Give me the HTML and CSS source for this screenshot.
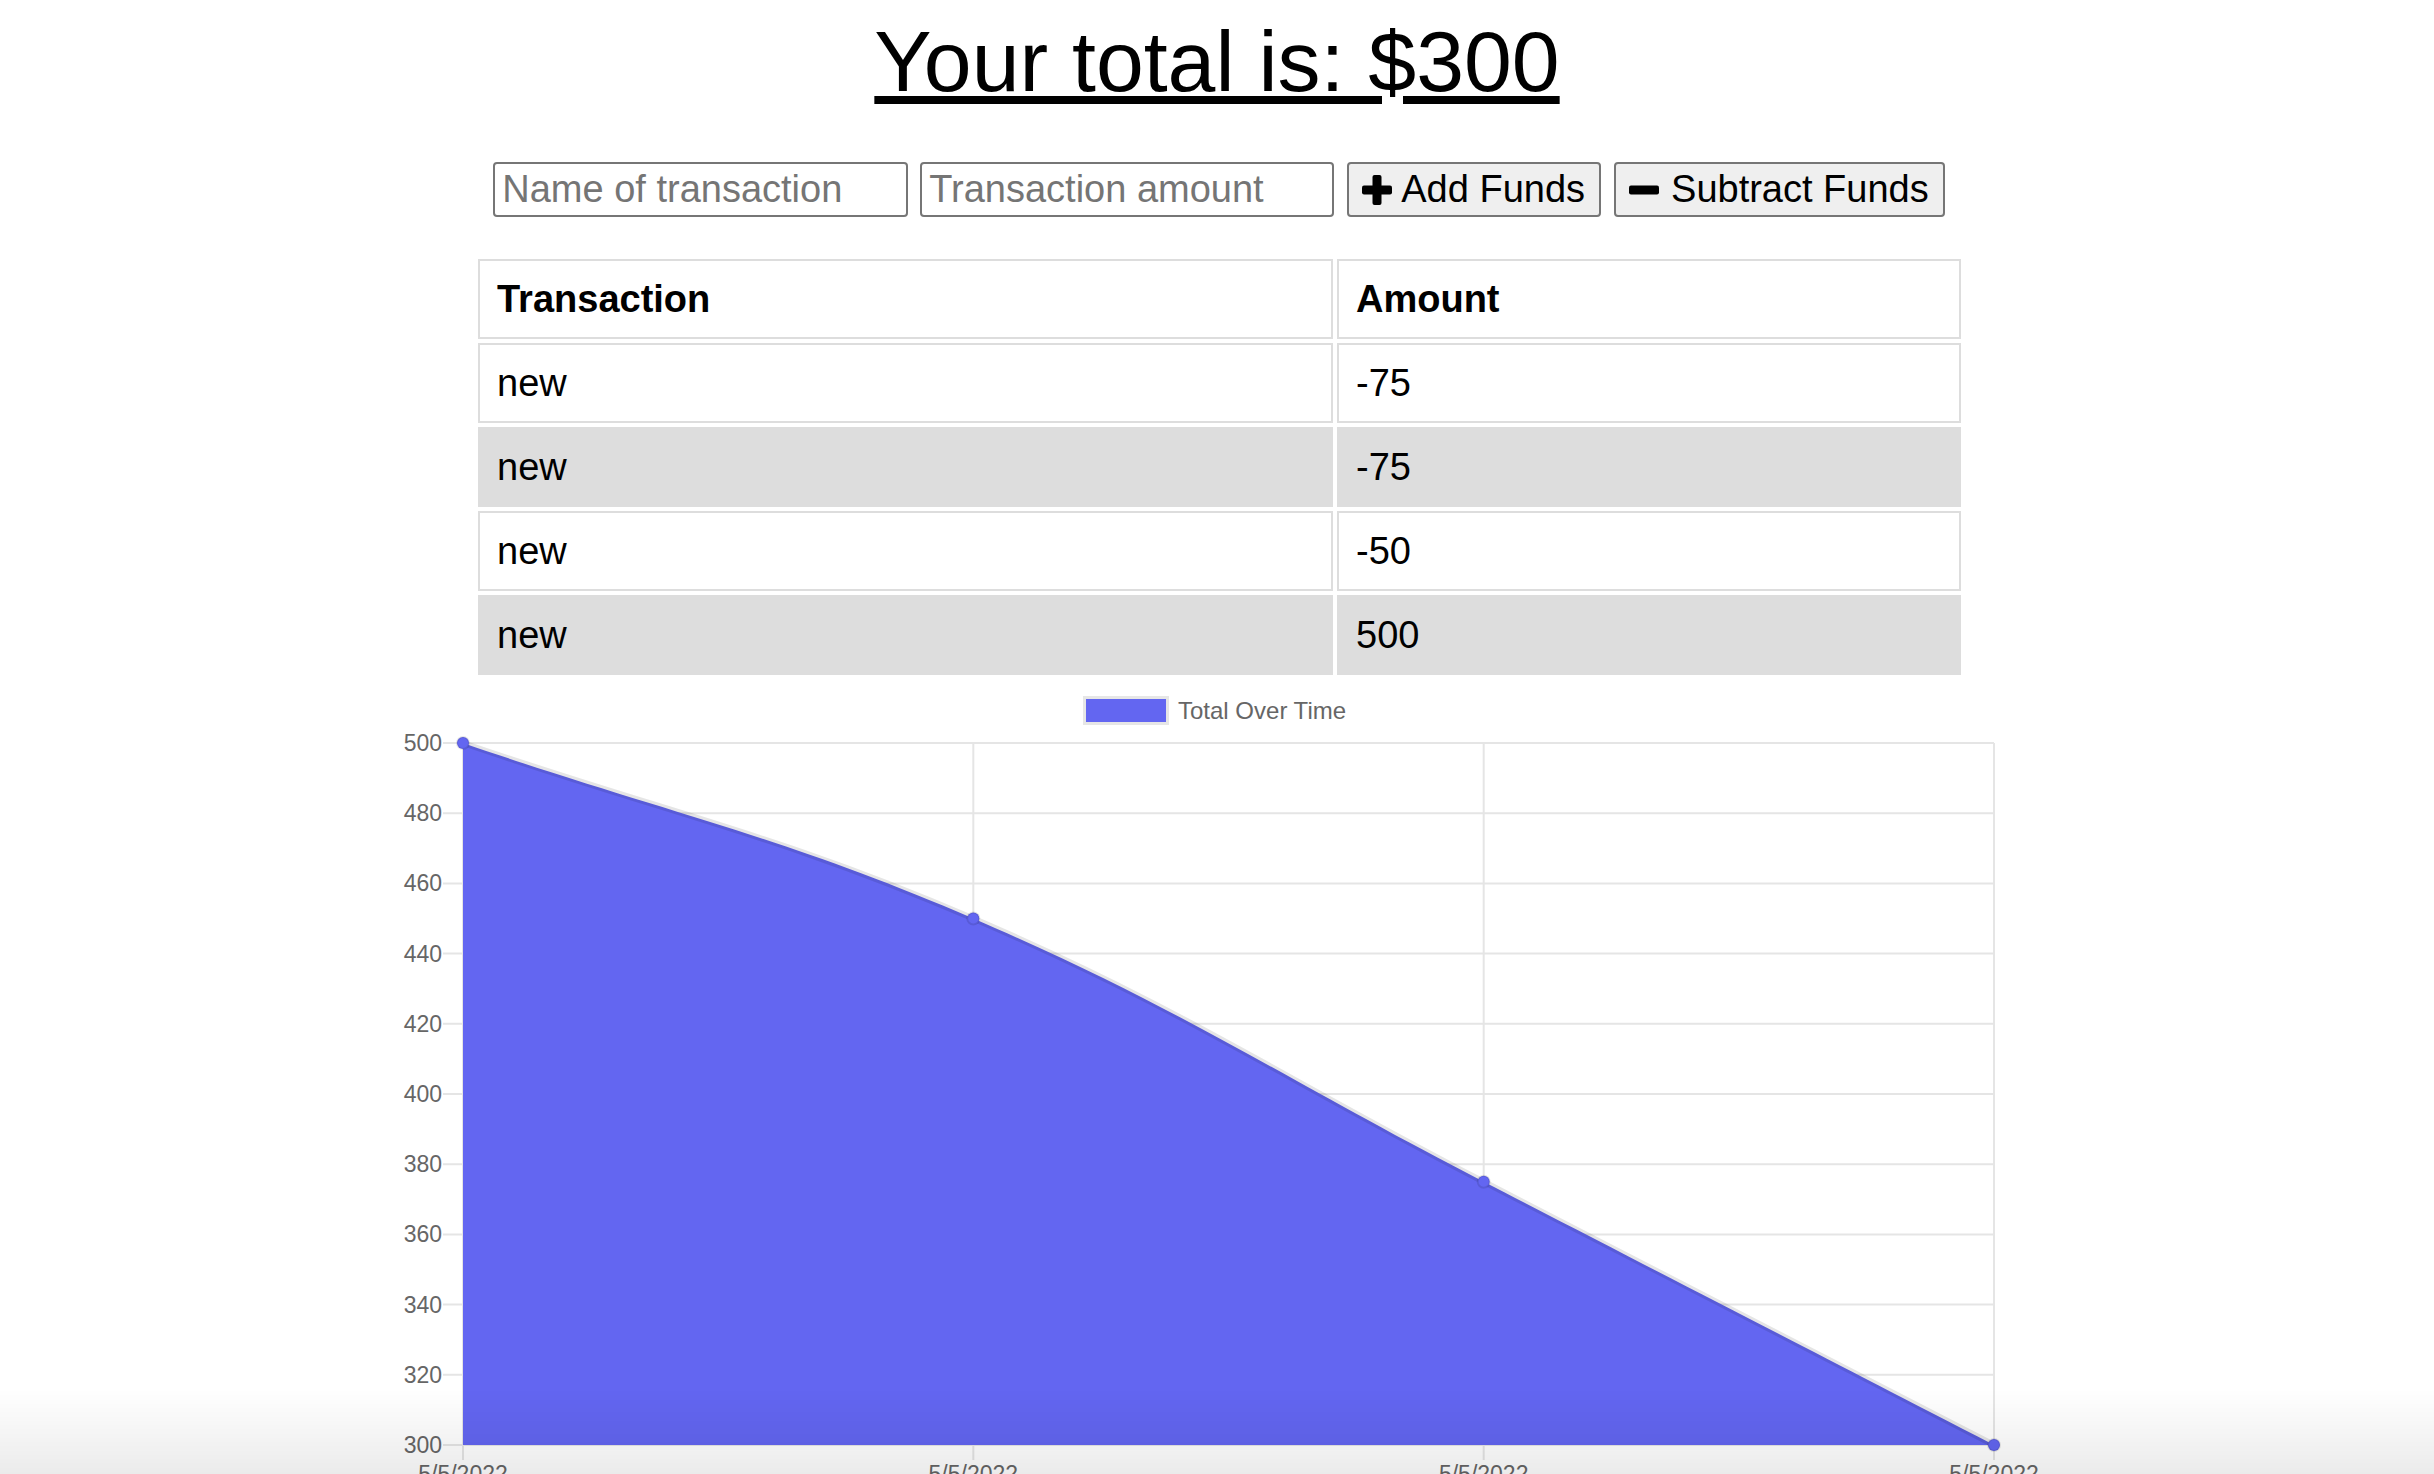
FILE: index.html
```html
<!DOCTYPE html>
<html lang="en">
<head>
<meta charset="utf-8">
<title>Budget Tracker</title>
<link rel="stylesheet" href="styles.css">
</head>
<body>
<main class="page">
  <h1 class="total">Your total is: $300</h1>

  <form class="entry">
    <input type="text" class="field field-name" placeholder="Name of transaction">
    <input type="text" class="field field-amount" placeholder="Transaction amount">
    <button type="button" class="btn btn-add">
      <svg class="btn-icon" viewBox="0 0 30 30" aria-hidden="true"><rect x="10.5" y="0" width="9" height="30" rx="2"/><rect x="0" y="10.5" width="30" height="9" rx="2"/></svg>
      <span class="btn-label btn-label-add">Add Funds</span>
    </button>
    <button type="button" class="btn btn-sub">
      <svg class="btn-icon" viewBox="0 0 30 30" aria-hidden="true"><rect x="0" y="10.5" width="30" height="9" rx="2"/></svg>
      <span class="btn-label btn-label-sub">Subtract Funds</span>
    </button>
  </form>

  <table class="ledger">
    <thead>
      <tr><th class="col-name">Transaction</th><th class="col-amount">Amount</th></tr>
    </thead>
    <tbody>
      <tr><td>new</td><td>-75</td></tr>
      <tr class="alt"><td>new</td><td>-75</td></tr>
      <tr><td>new</td><td>-50</td></tr>
      <tr class="alt"><td>new</td><td>500</td></tr>
    </tbody>
  </table>

  <div class="chart">
    <svg class="chart-svg" viewBox="0 0 2434 794" width="2434" height="794">
      <g class="legend">
        <rect class="legend-box" x="1084.5" y="17.5" width="83" height="26"/>
        <text class="legend-text" x="1178" y="38.5">Total Over Time</text>
      </g>
      <g class="grid">
        <line x1="443" y1="63" x2="1994" y2="63"/>
        <line x1="443" y1="133.2" x2="1994" y2="133.2"/>
        <line x1="443" y1="203.4" x2="1994" y2="203.4"/>
        <line x1="443" y1="273.6" x2="1994" y2="273.6"/>
        <line x1="443" y1="343.8" x2="1994" y2="343.8"/>
        <line x1="443" y1="414" x2="1994" y2="414"/>
        <line x1="443" y1="484.2" x2="1994" y2="484.2"/>
        <line x1="443" y1="554.4" x2="1994" y2="554.4"/>
        <line x1="443" y1="624.6" x2="1994" y2="624.6"/>
        <line x1="443" y1="694.8" x2="1994" y2="694.8"/>
        <line x1="443" y1="765" x2="1994" y2="765"/>
        <line x1="463" y1="63" x2="463" y2="780"/>
        <line x1="973.3" y1="63" x2="973.3" y2="780"/>
        <line x1="1483.7" y1="63" x2="1483.7" y2="780"/>
        <line x1="1994" y1="63" x2="1994" y2="780"/>
      </g>
      <g class="ticks-y">
        <text x="442" y="71">500</text>
        <text x="442" y="141.2">480</text>
        <text x="442" y="211.4">460</text>
        <text x="442" y="281.6">440</text>
        <text x="442" y="351.8">420</text>
        <text x="442" y="422">400</text>
        <text x="442" y="492.2">380</text>
        <text x="442" y="562.4">360</text>
        <text x="442" y="632.6">340</text>
        <text x="442" y="702.8">320</text>
        <text x="442" y="773">300</text>
      </g>
      <g class="ticks-x">
        <text x="463" y="802">5/5/2022</text>
        <text x="973.3" y="802">5/5/2022</text>
        <text x="1483.7" y="802">5/5/2022</text>
        <text x="1994" y="802">5/5/2022</text>
      </g>
      <path class="area" d="M463 63 C667.1 133.2 775.5 153.5 973.3 238.5 C1183.8 329 1279.6 396.45 1483.7 501.75 C1687.8 607.05 1789.9 659.7 1994 765 L1994 765 L463 765 Z"/>
      <path class="line" d="M463 63 C667.1 133.2 775.5 153.5 973.3 238.5 C1183.8 329 1279.6 396.45 1483.7 501.75 C1687.8 607.05 1789.9 659.7 1994 765"/>
      <g class="points">
        <circle cx="463" cy="63" r="6"/>
        <circle cx="973.3" cy="238.5" r="6"/>
        <circle cx="1483.7" cy="501.75" r="6"/>
        <circle cx="1994" cy="765" r="6"/>
      </g>
    </svg>
  </div>
</main>
<div class="fade"></div>
</body>
</html>
```

FILE: styles.css
```css
html, body {
  margin: 0;
  padding: 0;
  background: #ffffff;
  overflow: hidden;
}

body {
  font-family: "Liberation Sans", Arial, sans-serif;
  color: #000000;
}

.page {
  display: flex;
  flex-direction: column;
  align-items: center;
}

.total {
  margin: 11px 0 0;
  font-size: 86px;
  line-height: 100px;
  font-weight: 400;
  text-decoration: underline;
  text-decoration-thickness: 8px;
  text-underline-offset: 5px;
}

.entry {
  display: flex;
  gap: 12px;
  margin: 51px 0 0;
  padding-left: 4px;
}

.field {
  box-sizing: border-box;
  width: 415px;
  height: 55px;
  margin: 0;
  padding: 0 7px;
  border: 2px solid #767676;
  border-radius: 4px;
  font-family: "Liberation Sans", Arial, sans-serif;
  font-size: 38px;
  color: #000000;
  background: #ffffff;
}

.field-amount {
  width: 414px;
}

.field::placeholder {
  color: #757575;
}

.btn {
  box-sizing: border-box;
  display: inline-flex;
  align-items: center;
  height: 55px;
  margin: 0 0 0 1px;
  padding: 0 14px 0 13px;
  border: 2px solid #767676;
  border-radius: 4px;
  background: #efefef;
  font-family: "Liberation Sans", Arial, sans-serif;
  font-size: 38px;
  color: #000000;
}

.btn-icon {
  width: 30px;
  height: 30px;
  fill: #000000;
  flex: none;
}

.btn-label-add {
  margin-left: 9px;
}

.btn-label-sub {
  margin-left: 12px;
}

.ledger {
  margin: 38px 0 0 5px;
  width: 1491px;
  table-layout: fixed;
  border-collapse: separate;
  border-spacing: 4px;
}

.ledger th,
.ledger td {
  box-sizing: border-box;
  height: 80px;
  padding: 0 17px;
  border: 2px solid #dddddd;
  font-size: 38px;
  text-align: left;
  vertical-align: middle;
}

.ledger th {
  font-weight: 700;
}

.col-name {
  width: 855px;
}

.ledger .alt td {
  background: #dddddd;
}

.chart {
  margin-top: 1px;
  width: 2434px;
}

.chart-svg {
  display: block;
}

.legend-box {
  fill: #6366f1;
  stroke: #e6e6e6;
  stroke-width: 3;
}

.legend-text,
.ticks-y text,
.ticks-x text {
  font-family: "Liberation Sans", Arial, sans-serif;
  font-size: 23px;
  fill: #666666;
}

.legend-text {
  font-size: 24px;
}

.ticks-y text {
  text-anchor: end;
}

.ticks-x text {
  text-anchor: middle;
}

.grid line {
  stroke: #e5e5e5;
  stroke-width: 2;
}

.area {
  fill: #6366f1;
}

.line {
  fill: none;
  stroke: rgba(0, 0, 0, 0.1);
  stroke-width: 6;
}

.points circle {
  fill: #6366f1;
  stroke: rgba(0, 0, 0, 0.1);
  stroke-width: 2;
}

.fade {
  position: fixed;
  left: 0;
  right: 0;
  bottom: 0;
  height: 85px;
  background: linear-gradient(to bottom, rgba(0, 0, 0, 0), rgba(0, 0, 0, 0.08));
  pointer-events: none;
}
```
